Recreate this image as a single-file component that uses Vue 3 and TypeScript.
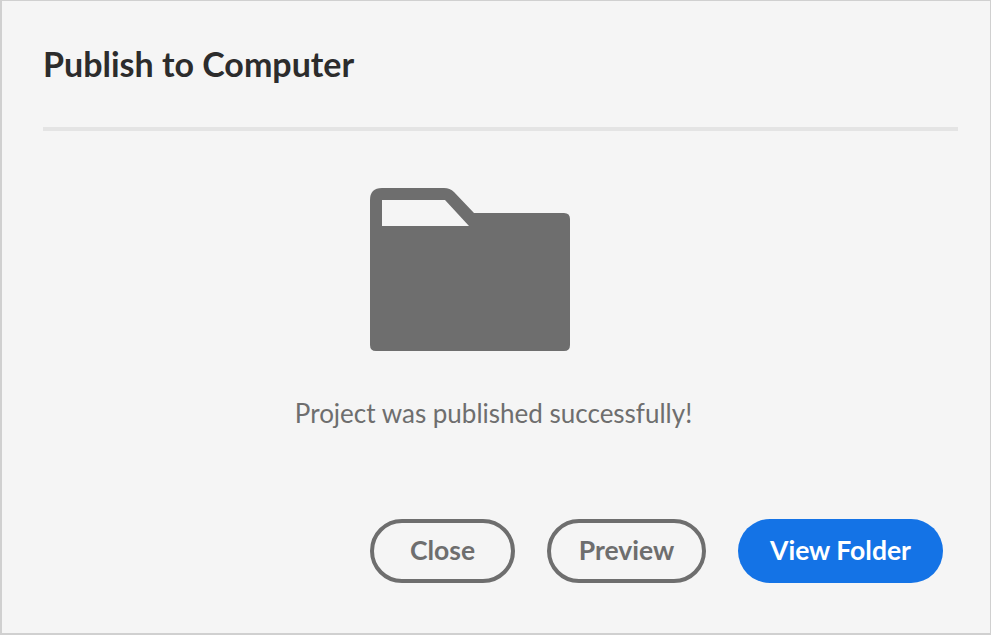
<script setup lang="ts">
const title = 'Publish to Computer'
</script>

<template>
  <div class="dialog">
    <header class="head">
      <h1 class="title">{{ title }}</h1>
    </header>
    <main class="body">
      <svg class="folder" width="200" height="163" viewBox="0 0 200 163" aria-hidden="true">
        <path
          fill="#6e6e6e"
          fill-rule="evenodd"
          d="M12 0H74Q80 0 84 4L104 25H194Q200 25 200 31V157Q200 163 194 163H6Q0 163 0 157V12Q0 0 12 0ZM12 12V38H99L75 12Z"
        />
      </svg>
      <p class="msg">Project was published successfully!</p>
    </main>
    <footer class="foot">
      <button class="btn outline close">Close</button>
      <button class="btn outline preview">Preview</button>
      <button class="btn primary">View Folder</button>
    </footer>
  </div>
</template>

<style>
html, body { margin: 0; padding: 0; }
</style>

<style scoped>
.dialog {
  box-sizing: border-box;
  width: 991px;
  height: 635px;
  background: #f5f5f5;
  border: 1px solid #d0d0d0;
  border-width: 1px 1px 2px 2px;
  display: flex;
  flex-direction: column;
  font-family: Lato, "Open Sans", sans-serif;
}
.head {
  margin: 0 32px 0 41px;
  height: 130px;
  box-sizing: border-box;
  border-bottom: 4px solid #e4e4e4;
  padding-top: 43px;
}
.title {
  margin: 0;
  font-size: 34px;
  line-height: 40px;
  font-weight: 700;
  color: #2c2c2c;
}
.body {
  display: flex;
  flex-direction: column;
  align-items: center;
  padding-top: 57px;
  padding-right: 5px;
}
.folder {
  display: block;
  margin-right: 48px;
}
.msg {
  margin: 45px 0 0;
  font-size: 26px;
  line-height: 34px;
  color: #6e6e6e;
}
.foot {
  margin-top: auto;
  display: flex;
  justify-content: flex-end;
  gap: 32px;
  padding: 0 47px 50px 0;
}
.btn {
  box-sizing: border-box;
  height: 64px;
  border-radius: 32px;
  font-family: inherit;
  font-size: 26.5px;
  line-height: 32px;
  font-weight: 700;
  padding: 0 0 3px;
}
.outline {
  background: transparent;
  border: 4px solid #6e6e6e;
  color: #6e6e6e;
}
.close { width: 145px; }
.preview { width: 159px; }
.primary {
  width: 205px;
  background: #1473e6;
  border: 0;
  color: #fff;
}
</style>
